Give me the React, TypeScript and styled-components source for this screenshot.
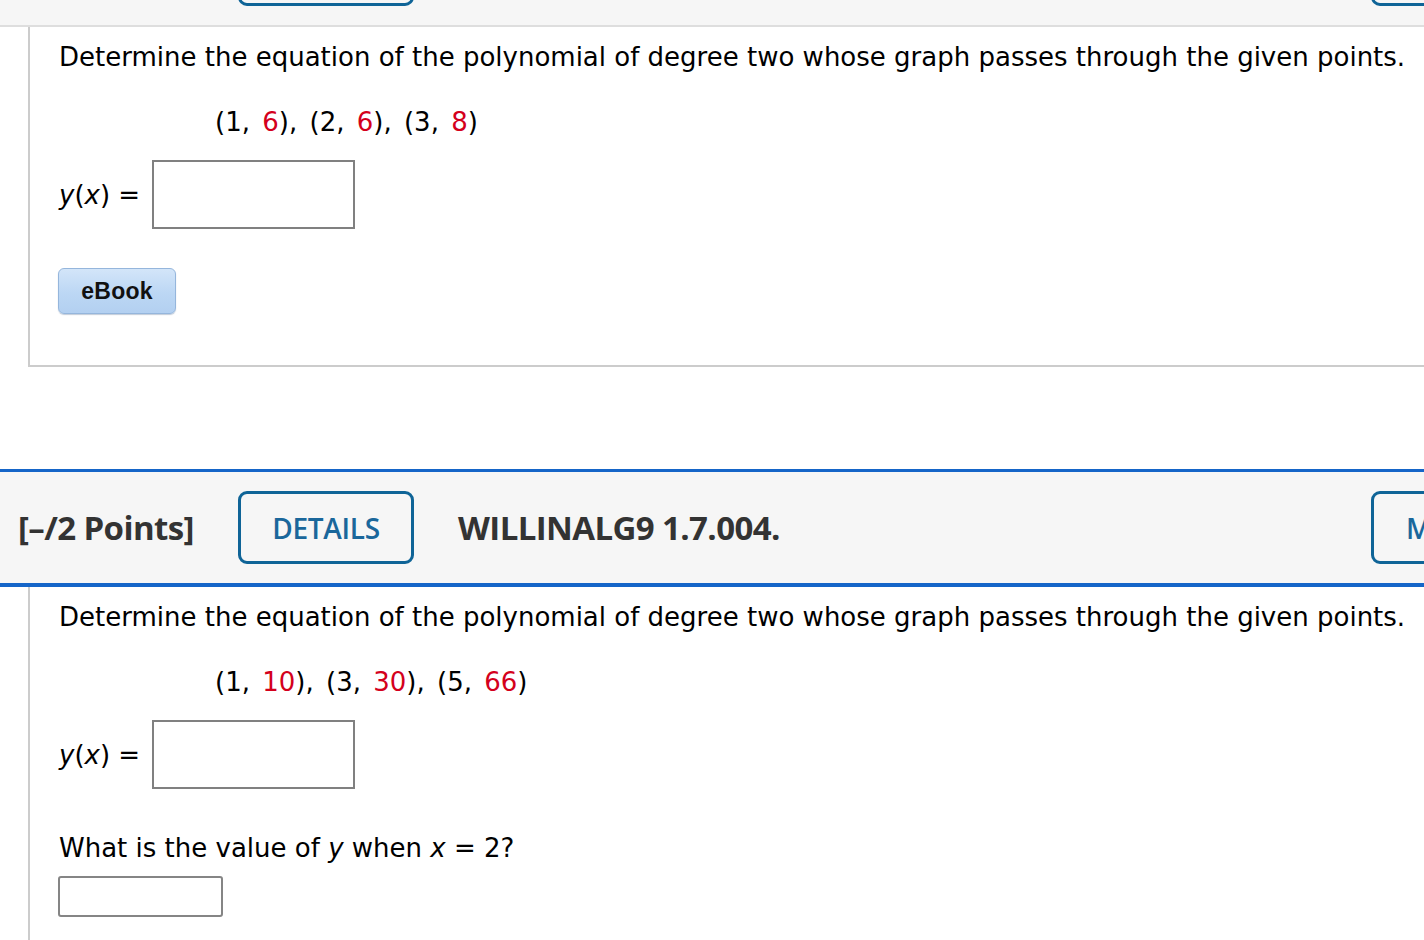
import React from "react";
import styled, { createGlobalStyle } from "styled-components";

const Global = createGlobalStyle`
  html, body { margin: 0; padding: 0; background: #fff; overflow: hidden; }
  body { font-family: "DejaVu Sans", Verdana, sans-serif; color: #000; }
`;

const Page = styled.div`
  width: 1424px;
  height: 940px;
  overflow: hidden;
`;

const Header = styled.div<{ $top?: boolean }>`
  display: flex;
  align-items: center;
  width: 1600px;
  height: 111px;
  box-sizing: content-box;
  background: #f6f6f6;
  border-top: 3px solid #1565c8;
  border-bottom: ${(p) => (p.$top ? "2px solid #dedede" : "4px solid #1565c8")};
  margin-top: ${(p) => (p.$top ? "-89px" : "0")};
  padding-left: 18px;
  font-family: "Open Sans", sans-serif;
  font-weight: 700;
  color: #333;
  & > * { flex-shrink: 0; }
`;

const PointsLabel = styled.span`
  font-size: 33px;
  letter-spacing: -0.6px;
  width: 220px;
`;

const HeaderButton = styled.div<{ $w: number; $left?: boolean }>`
  box-sizing: border-box;
  width: ${(p) => p.$w}px;
  height: 73px;
  border: 3px solid #0f6497;
  border-radius: 9px;
  display: flex;
  align-items: center;
  justify-content: ${(p) => (p.$left ? "flex-start" : "center")};
  padding-left: ${(p) => (p.$left ? "32px" : "0")};
  color: #1a679b;
  font-size: 28px;
  font-weight: 600;
  letter-spacing: -0.3px;
`;

const ItemNo = styled.span`
  font-size: 33px;
  letter-spacing: -0.6px;
  margin-left: 44px;
  width: 913px;
`;

const Panel = styled.div`
  margin-left: 28px;
  border-left: 2px solid #cccccc;
  border-bottom: 2px solid #cccccc;
  padding: 13px 0 51px 29px;
`;

const LastPanel = styled(Panel)`
  border-bottom: none;
  padding-bottom: 40px;
`;

const Text = styled.p`
  margin: 0;
  font-size: 26px;
  line-height: 34px;
  white-space: nowrap;
`;

const Points = styled(Text)`
  margin-top: 31px;
  padding-left: 156px;
  word-spacing: 4px;
`;

const Red = styled.span`
  color: #d4001c;
`;

const AnswerRow = styled.div`
  display: flex;
  align-items: center;
  margin-top: 21px;
  gap: 12px;
`;

const Label = styled.span`
  font-size: 26px;
  line-height: 34px;
`;

const Var = styled.i`
  font-style: italic;
`;

const AnswerBox = styled.div`
  box-sizing: border-box;
  width: 203px;
  height: 69px;
  border: 2px solid #808080;
  background: #fff;
`;

const SmallBox = styled.div`
  box-sizing: border-box;
  width: 165px;
  height: 41px;
  border: 2px solid #858585;
  border-radius: 3px;
  margin-top: 11px;
  margin-left: -1px;
`;

const EBook = styled.div`
  box-sizing: border-box;
  margin-top: 39px;
  margin-left: -1px;
  width: 118px;
  height: 46px;
  border: 1px solid #95b6dc;
  border-radius: 6px;
  background: linear-gradient(#d3e5f9, #bcd7f4 55%, #b3d0f1);
  box-shadow: 0 1px 1px rgba(80, 110, 150, 0.35);
  display: flex;
  align-items: center;
  justify-content: center;
  font-family: "Liberation Sans", Arial, sans-serif;
  font-weight: 700;
  font-size: 23px;
  letter-spacing: 0.2px;
  color: #111;
`;

const Gap = styled.div`
  height: 102px;
`;

const Question = styled(Text)`
  margin-top: 42px;
`;

const Pt = ({ a, b }: { a: string; b: string }) => (
  <>
    ({a}, <Red>{b}</Red>)
  </>
);

export default function App() {
  return (
    <Page>
      <Global />
      <Header $top>
        <PointsLabel />
        <HeaderButton $w={176} />
        <ItemNo />
        <HeaderButton $w={200} $left />
      </Header>
      <Panel>
        <Text>
          Determine the equation of the polynomial of degree two whose graph passes through the given points.
        </Text>
        <Points>
          <Pt a="1" b="6" />, <Pt a="2" b="6" />, <Pt a="3" b="8" />
        </Points>
        <AnswerRow>
          <Label>
            <Var>y</Var>(<Var>x</Var>) =
          </Label>
          <AnswerBox />
        </AnswerRow>
        <EBook>eBook</EBook>
      </Panel>
      <Gap />
      <Header>
        <PointsLabel>[–/2 Points]</PointsLabel>
        <HeaderButton $w={176}>DETAILS</HeaderButton>
        <ItemNo>WILLINALG9 1.7.004.</ItemNo>
        <HeaderButton $w={200} $left>MY NOTES</HeaderButton>
      </Header>
      <LastPanel>
        <Text>
          Determine the equation of the polynomial of degree two whose graph passes through the given points.
        </Text>
        <Points>
          <Pt a="1" b="10" />, <Pt a="3" b="30" />, <Pt a="5" b="66" />
        </Points>
        <AnswerRow>
          <Label>
            <Var>y</Var>(<Var>x</Var>) =
          </Label>
          <AnswerBox />
        </AnswerRow>
        <Question>
          What is the value of <Var>y</Var> when <Var>x</Var> = 2?
        </Question>
        <SmallBox />
      </LastPanel>
    </Page>
  );
}
